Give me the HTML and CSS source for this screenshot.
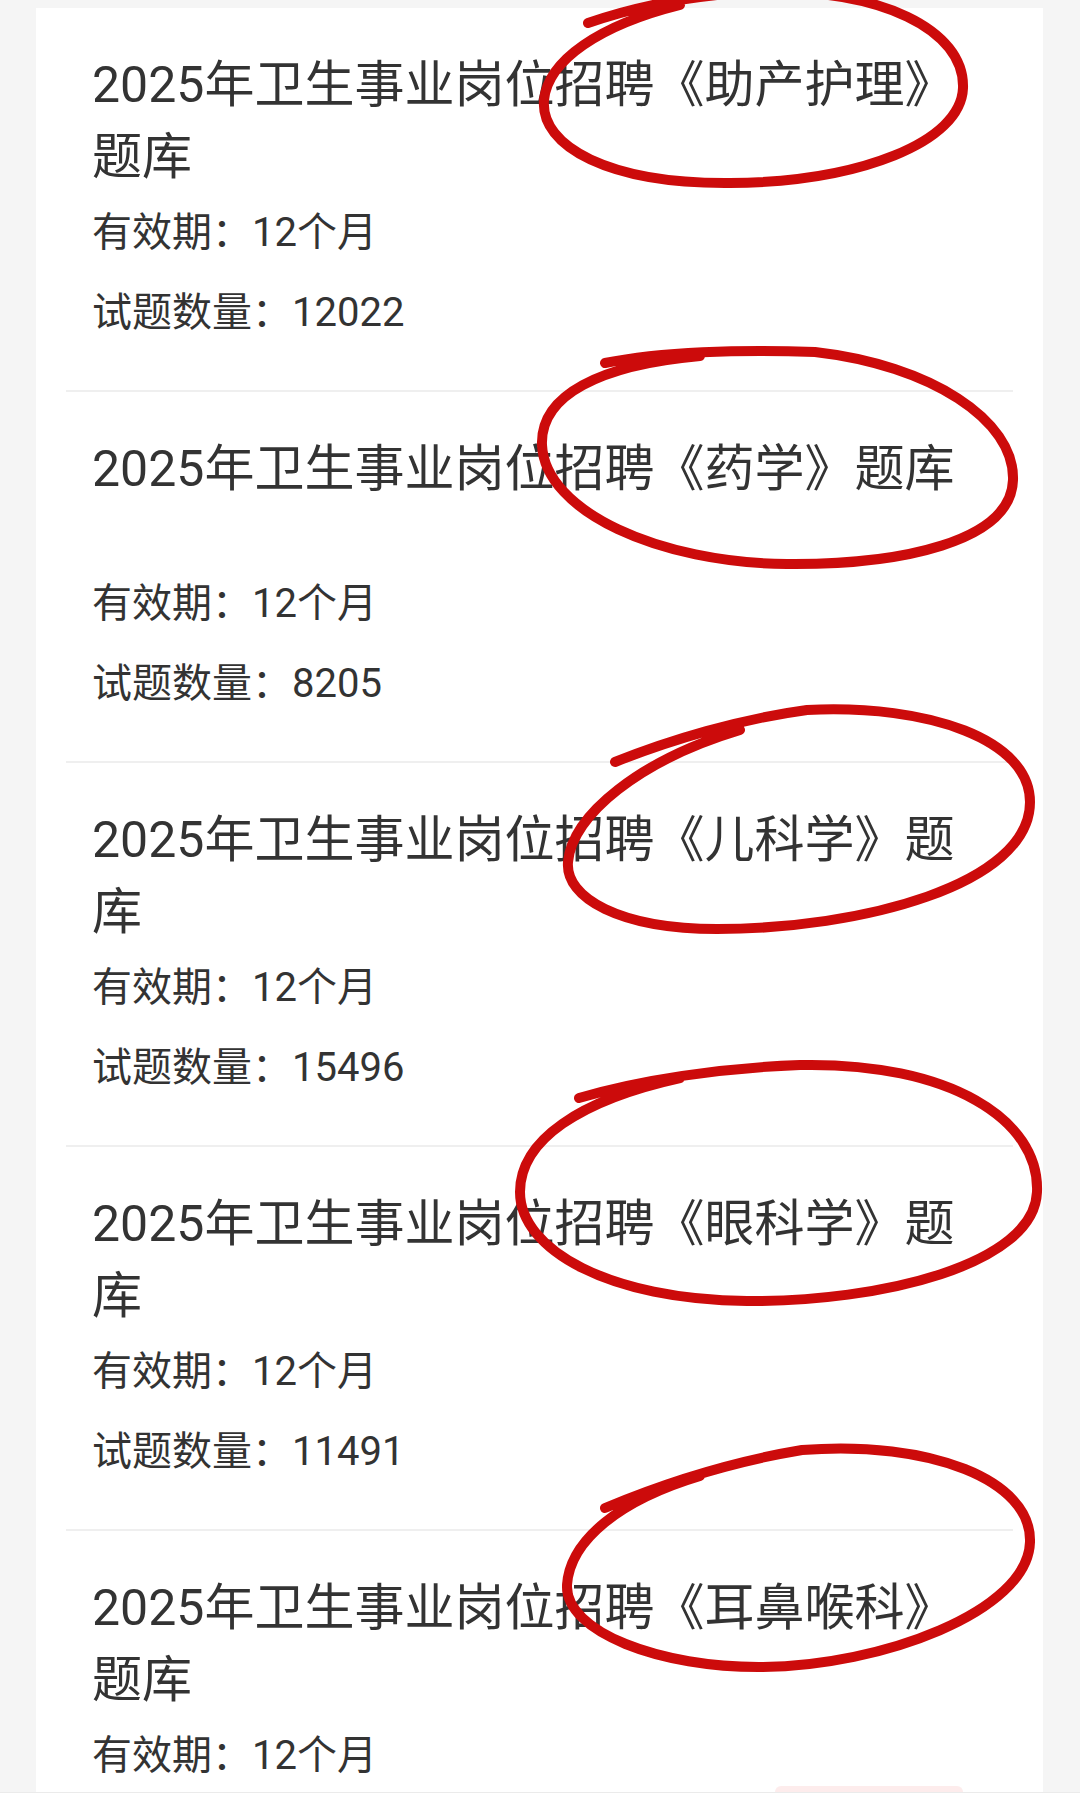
FILE: index.html
```html
<!DOCTYPE html>
<html lang="zh-CN">
<head>
<meta charset="utf-8">
<title>题库列表</title>
<link rel="stylesheet" href="styles.css">
</head>
<body>
<div class="page">
  <div class="card">
    <div class="item">
      <div class="title">2025年卫生事业岗位招聘《助产护理》题库</div>
      <div class="meta">有效期：12个月</div>
      <div class="meta">试题数量：12022</div>
    </div>
    <div class="item">
      <div class="title">2025年卫生事业岗位招聘《药学》题库</div>
      <div class="meta">有效期：12个月</div>
      <div class="meta">试题数量：8205</div>
    </div>
    <div class="item">
      <div class="title">2025年卫生事业岗位招聘《儿科学》题库</div>
      <div class="meta">有效期：12个月</div>
      <div class="meta">试题数量：15496</div>
    </div>
    <div class="item">
      <div class="title">2025年卫生事业岗位招聘《眼科学》题库</div>
      <div class="meta">有效期：12个月</div>
      <div class="meta">试题数量：11491</div>
    </div>
    <div class="item item-last">
      <div class="title">2025年卫生事业岗位招聘《耳鼻喉科》题库</div>
      <div class="meta">有效期：12个月</div>
    </div>
  </div>

  <svg class="marks" width="1080" height="1802" viewBox="0 0 1080 1802" aria-hidden="true">
    <g fill="none" stroke="#cc0b0b" stroke-width="10" stroke-linecap="round" stroke-linejoin="round">
      <path d="M588,23 C620,12 680,-5 760,-8 C880,-12 965,30 963,88 C961,142 860,182 730,183 C610,184 540,147 544,100 C548,60 600,25 680,5"/>
      <path d="M605,363 C660,352 740,349 815,352 C930,365 1015,420 1013,480 C1011,542 900,565 787,564 C660,563 545,512 542,445 C540,395 600,365 700,356"/>
      <path d="M615,762 C670,740 740,719 807,710 C930,704 1030,740 1030,802 C1030,885 860,929 717,929 C620,929 565,898 568,862 C572,815 640,760 740,730"/>
      <path d="M579,1098 C640,1080 720,1068 800,1065 C950,1062 1040,1120 1037,1192 C1034,1265 880,1302 747,1301 C610,1300 520,1250 520,1192 C520,1140 580,1100 680,1078"/>
      <path d="M605,1508 C660,1485 730,1462 802,1450 C930,1440 1032,1480 1030,1542 C1028,1612 880,1666 763,1667 C660,1668 565,1632 567,1585 C570,1540 620,1500 700,1476"/>
    </g>
  </svg>

  <div class="bottom-bar">
    <div class="pill"></div>
  </div>
</div>
</body>
</html>
```

FILE: styles.css
```css
* {
  box-sizing: border-box;
}

html, body {
  margin: 0;
  padding: 0;
}

body {
  background: #f5f5f5;
  font-family: Roboto, "Noto Sans CJK SC", "Noto Sans", sans-serif;
  color: #333333;
}

.page {
  position: relative;
  width: 1080px;
  height: 1802px;
  overflow: hidden;
}

.card {
  margin: 8px 37px 0 36px;
  padding: 0 30px;
  background: #ffffff;
}

.item {
  display: flex;
  flex-direction: column;
  padding: 41px 26px 37px;
  border-top: 2px solid #efefef;
}

.item:first-child {
  border-top: none;
}

.item-last {
  padding-bottom: 40px;
}

.title {
  font-size: 50px;
  line-height: 72px;
  min-height: 131px;
  color: #333333;
}

.meta {
  font-size: 40px;
  line-height: 80px;
  color: #333333;
}

.marks {
  position: absolute;
  top: 0;
  left: 0;
  pointer-events: none;
}

.bottom-bar {
  position: absolute;
  left: 0;
  right: 0;
  bottom: 0;
  height: 10px;
  background: #ffffff;
  border-top: 1px solid #ebebeb;
}

.pill {
  position: absolute;
  left: 775px;
  top: -7px;
  width: 188px;
  height: 6px;
  border-radius: 6px 6px 0 0;
  background: #fdecec;
}
```
